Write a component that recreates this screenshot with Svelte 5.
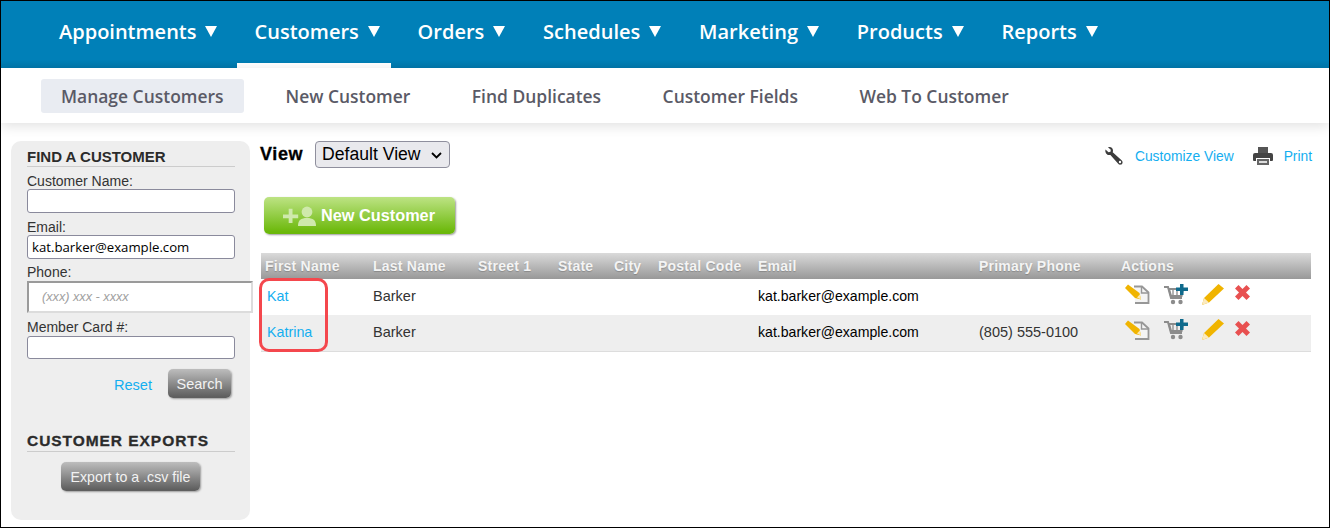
<script>
  const nav = [
    { label: 'Appointments' },
    { label: 'Customers', active: true },
    { label: 'Orders' },
    { label: 'Schedules' },
    { label: 'Marketing' },
    { label: 'Products' },
    { label: 'Reports' }
  ];
  const sub = ['Manage Customers', 'New Customer', 'Find Duplicates', 'Customer Fields', 'Web To Customer'];
  const cols = ['First Name', 'Last Name', 'Street 1', 'State', 'City', 'Postal Code', 'Email', 'Primary Phone', 'Actions'];
  const widths = [108, 105, 80, 56, 44, 100, 221, 142, 194];
  const rows = [
    { first: 'Kat', last: 'Barker', email: 'kat.barker@example.com', phone: '' },
    { first: 'Katrina', last: 'Barker', email: 'kat.barker@example.com', phone: '(805) 555-0100' }
  ];
</script>

<div class="frame">
  <nav class="top">
    {#each nav as n}
      <a class="top-item" class:active={n.active} href="#top">{n.label}<span class="tri"></span></a>
    {/each}
  </nav>

  <div class="sub">
    {#each sub as s, i}
      <a class="sub-item" class:current={i === 0} href="#sub">{s}</a>
    {/each}
  </div>

  <div class="content">
    <aside class="side">
      <h3 class="side-title">FIND A CUSTOMER</h3>
      <label class="field">Customer Name:<input type="text" /></label>
      <label class="field">Email:<input type="text" value="kat.barker@example.com" /></label>
      <label class="field f-phone">Phone:<input class="phone" type="text" placeholder="(xxx) xxx - xxxx" /></label>
      <label class="field f-card">Member Card #:<input type="text" /></label>
      <div class="side-actions">
        <a class="link reset" href="#reset">Reset</a>
        <button class="gray search">Search</button>
      </div>
      <h3 class="side-title exports">CUSTOMER EXPORTS</h3>
      <div class="export-row"><button class="gray export">Export to a .csv file</button></div>
    </aside>

    <main class="main">
      <div class="toolbar">
        <div class="view">
          <span class="view-label">View</span>
          <div class="select-wrap">
            <select><option>Default View</option></select>
            <svg class="chev" width="11" height="7" viewBox="0 0 11 7"><path d="M1 1l4.500 4.500L10 1" fill="none" stroke="#000" stroke-width="1.800"/></svg>
          </div>
        </div>
        <div class="tools">
          <svg class="tool-ic" width="20" height="20" viewBox="0 0 20 20"><path d="M1.500 3.500 L4.500 6.200 L6.500 5.800 L6.800 3.800 L4 1.200 C6.500 .2 9.200 1.800 9 4.600 C9 5.300 8.900 5.700 8.700 6.200 L17.600 14.200 C19.300 15.800 18.600 18.200 17 18.600 C15.800 19 14.800 18.500 14 17.500 L6.400 8.900 C3.400 9.900 .6 7 1.500 3.500 Z" fill="#3d3d3d"/><circle cx="16" cy="16" r="1.200" fill="#fff"/></svg>
          <a class="link" href="#cv">Customize View</a>
          <svg class="tool-ic print-ic" width="20" height="20" viewBox="0 0 20 20"><path d="M5 1h10v6H5z" fill="#555"/><path d="M2 7h16a2 2 0 0 1 2 2v5a1 1 0 0 1-1 1h-2v-3H3v3H1a1 1 0 0 1-1-1V9a2 2 0 0 1 2-2Z" fill="#444"/><path d="M4 13h12v6H4z" fill="#666"/><path d="M6 15h8v2H6z" fill="#ddd"/></svg>
          <a class="link" href="#print">Print</a>
        </div>
      </div>

      <button class="new-btn">
        <svg width="34" height="20" viewBox="0 0 34 20"><path d="M0 11h6V5h4v6h6v4h-6v5H6v-5H0Z" transform="translate(0 -2) scale(.95)" fill="#cfe9ac"/><circle cx="24" cy="6" r="5.400" fill="#cfe9ac"/><path d="M15 20c0-6 3-8 9-8s9 2 9 8Z" fill="#cfe9ac"/></svg>
        New Customer
      </button>

      <div class="table-wrap">
        <table>
          <colgroup>
            {#each widths as w}<col style:width="{w}px" />{/each}
          </colgroup>
          <thead>
            <tr>{#each cols as c}<th>{c}</th>{/each}</tr>
          </thead>
          <tbody>
            {#each rows as r}
              <tr>
                <td class="first"><a class="link" href="#c">{r.first}</a></td>
                <td>{r.last}</td>
                <td></td><td></td><td></td><td></td>
                <td class="dark">{r.email}</td>
                <td>{r.phone}</td>
                <td>
                  <div class="acts">
                    <svg width="25" height="20" viewBox="0 0 25 20">
                      <path d="M9 2.500h8l6.500 6V19H10" fill="#f4f4f4" stroke="#979797" stroke-width="1.800"/>
                      <path d="M16.500 3v6h6.500" fill="none" stroke="#979797" stroke-width="1.400"/>
                      <path d="M0 4 3 .5 14.500 9 16 15.500 10 14 Z" fill="#f0b400"/>
                      <path d="M12 13.500l2.800-3 1.200 5Z" fill="#fbe7ae"/>
                    </svg>
                    <svg width="25" height="21" viewBox="0 0 25 21">
                      <path d="M0 3h4l3 11h11" fill="none" stroke="#8c8c8c" stroke-width="2"/>
                      <path d="M5 5h14l-1.500 7H7Z" fill="none" stroke="#8c8c8c" stroke-width="2"/>
                      <path d="M9 5v7M13 5v7M17 5v7" stroke="#8c8c8c" stroke-width="1.300"/>
                      <circle cx="9" cy="18" r="2.200" fill="#8c8c8c"/><circle cx="16.500" cy="18" r="2.200" fill="#8c8c8c"/>
                      <path d="M16 0h3.500v3.500H24v3.500h-4.500v4H16V7h-4V3.500h4Z" fill="#0f6a8c"/>
                    </svg>
                    <svg width="22" height="21" viewBox="0 0 22 21">
                      <path d="M16.500 0 22 4.500 7 18.500 0 21 2 14Z" fill="#f0b400"/>
                      <path d="M2 14 7 18.500 0 21Z" fill="#fbeac0"/>
                    </svg>
                    <svg class="x-ic" width="15" height="15" viewBox="0 0 15 15">
                      <path d="M3.500 0 7.500 4 11.500 0 15 3.500 11 7.500 15 11.500 11.500 15 7.500 11 3.500 15 0 11.500 4 7.500 0 3.500Z" fill="#e85050"/>
                    </svg>
                  </div>
                </td>
              </tr>
            {/each}
          </tbody>
        </table>
        <div class="callout"></div>
      </div>
    </main>
  </div>
</div>

<style>
  :global(body) { margin: 0; background: #fff; }
  .frame {
    width: 1330px; height: 528px; box-sizing: border-box;
    border: 1px solid #000; background: #fff; overflow: hidden;
    font-family: "Liberation Sans", Arial, sans-serif;
    display: flex; flex-direction: column;
  }
  a { text-decoration: none; }
  .top {
    height: 67px; flex: none; box-sizing: border-box; padding-left: 40px; gap: 8.8px;
    display: flex; background: linear-gradient(#0080b8 0 88%, #0077ab);
    font-family: "Open Sans", sans-serif;
  }
  .top-item {
    display: flex; align-items: center; height: 67px; box-sizing: border-box;
    padding: 0 11px 2px 18px; border-bottom: 5px solid transparent;
    color: #fff; font-size: 20px; font-weight: 600; white-space: nowrap;
  }
  .top-item:first-child { padding-right: 10.3px; }
  .top-item.active { border-bottom-color: #fff; margin-left: .9px; padding-left: 17.1px; }
  .tri {
    width: 0; height: 0; margin-left: 9px; margin-top: 1px;
    border-left: 6px solid transparent; border-right: 6px solid transparent; border-top: 11px solid #fff;
  }
  .sub {
    height: 55px; flex: none; box-sizing: border-box; padding: 11px 0 0 40px;
    display: flex; gap: 21.5px; align-items: flex-start;
    box-shadow: 0 3px 12px rgba(0,0,0,.12); position: relative;
    font-family: "Open Sans", sans-serif;
  }
  .sub-item {
    height: 34px; line-height: 34px; padding: 0 20px; border-radius: 3px;
    color: #5a5a66; font-size: 17.45px; font-weight: 600; white-space: nowrap;
  }
  .sub-item.current { background: #e9ecf2; width: 163px; }

  .content { display: flex; padding: 18px 18px 0 10px; gap: 11px; }
  .side {
    width: 239px; height: 379px; flex: none; box-sizing: border-box;
    background: #eee; border-radius: 10px; padding: 10px 15px 0 16px;
    color: #333; font-size: 14px;
  }
  .side-title {
    margin: 0; height: 15px; line-height: 12px; font-size: 15px; font-weight: 700;
    color: #2b2b2b; border-bottom: 1px solid #ccc;
  }
  .field { display: block; line-height: 16px; margin-top: 6px; }
  .f-phone { margin-top: 5px; }
  .field input {
    display: block; width: 208px; height: 24px; box-sizing: border-box; margin: 0;
    padding: 0 4px 1px; background: #fff; border: 1px solid #8a8a9c; border-radius: 3px;
    font: 13.2px "Open Sans", sans-serif; color: #000; outline: none;
  }
  .field input.phone {
    width: 226px; height: 32px; margin-top: 1px; padding: 0 0 0 13px; border-radius: 0;
    border: 2px solid; border-color: #9a9a9a #dcdcdc #dcdcdc #9a9a9a;
    font: italic 12.7px "Liberation Sans", sans-serif;
  }
  .phone::placeholder { color: #a0a0a0; opacity: 1; }
  .f-card input { height: 23px; margin-top: 1px; }
  .side-actions { display: flex; justify-content: flex-end; align-items: center; gap: 16px; margin-top: 10px; padding-right: 4px; }
  .link { color: #14aef0; font-size: 13.8px; }
  .reset { font-size: 14.6px; margin-top: 2px; }
  .gray {
    border: 0; border-radius: 5px; color: #f2f2f2; font: 14.5px "Liberation Sans", sans-serif;
    background: linear-gradient(#bdbdbd, #5f5f5f 95%);
    box-shadow: 1px 1px 2px rgba(0,0,0,.35); padding: 0;
  }
  .search { width: 63px; height: 29px; }
  .exports {
    margin-top: 35px; height: 18px; line-height: 15px; font-size: 15.5px;
    letter-spacing: .95px; -webkit-text-stroke: .3px #2b2b2b;
  }
  .export-row { display: flex; justify-content: center; margin-top: 10px; padding-right: 1px; }
  .export { width: 139px; height: 29px; font-size: 14.2px; }

  .main { flex: 1; min-width: 0; }
  .toolbar { display: flex; justify-content: space-between; align-items: flex-start; height: 56px; }
  .view { display: flex; align-items: center; gap: 12px; margin-left: -1px; }
  .view-label { font-size: 18px; font-weight: 700; color: #000; letter-spacing: .6px; -webkit-text-stroke: .3px #000; }
  .select-wrap { position: relative; display: flex; }
  select {
    appearance: none; width: 135px; height: 27px; padding: 0 0 2px 6px;
    font: 17.6px "Liberation Sans", sans-serif; color: #000;
    background-color: #e9e9ed; border: 1px solid #8f8f9d; border-radius: 4px;
  }
  .chev { position: absolute; right: 8px; top: 11px; pointer-events: none; }
  .tools { display: flex; align-items: center; gap: 11px; padding-top: 5px; margin-right: -1px; }
  .print-ic { margin-left: 8px; }
  .new-btn {
    display: flex; align-items: center; gap: 4px; margin: 0 0 0 3px;
    width: 191px; height: 37px; padding: 0 0 0 19px; box-sizing: border-box;
    border: 0; border-radius: 5px; color: #fff; font: 700 16.3px "Liberation Sans", sans-serif;
    background: linear-gradient(#bde384, #6bb80a 95%);
    box-shadow: 1px 1px 2px rgba(0,0,0,.4);
  }
  .table-wrap { position: relative; margin-top: 19px; }
  table { width: 1050px; table-layout: fixed; border-collapse: collapse; font-size: 14.5px; color: #333; border-bottom: 1px solid #ddd; }
  thead tr { background: linear-gradient(#dadada, #989898); }
  th {
    height: 26px; padding: 0 0 0 4px; text-align: left; font-size: 14px; font-weight: 700;
    color: #f4f4f4; letter-spacing: .23px; white-space: nowrap; text-shadow: 0 1px 1px rgba(0,0,0,.2);
  }
  td { height: 36px; box-sizing: border-box; padding: 0 0 2px 4px; white-space: nowrap; }
  td.first { padding-left: 6px; }
  td.first .link { font-size: 14.3px; }
  td.dark { color: #000; font-size: 14.1px; }
  tbody tr:nth-child(2) { background: #eee; }
  .acts { display: flex; align-items: center; gap: 14px; margin: -4px 0 0 4px; }
  .acts svg:nth-child(3) { margin-left: -1px; }
  .x-ic { margin-left: -3px; margin-top: -3px; }
  .callout {
    position: absolute; left: -2px; top: 25px; width: 69px; height: 74px; box-sizing: border-box;
    border: 3px solid #f4474d; border-radius: 10px;
  }
</style>
